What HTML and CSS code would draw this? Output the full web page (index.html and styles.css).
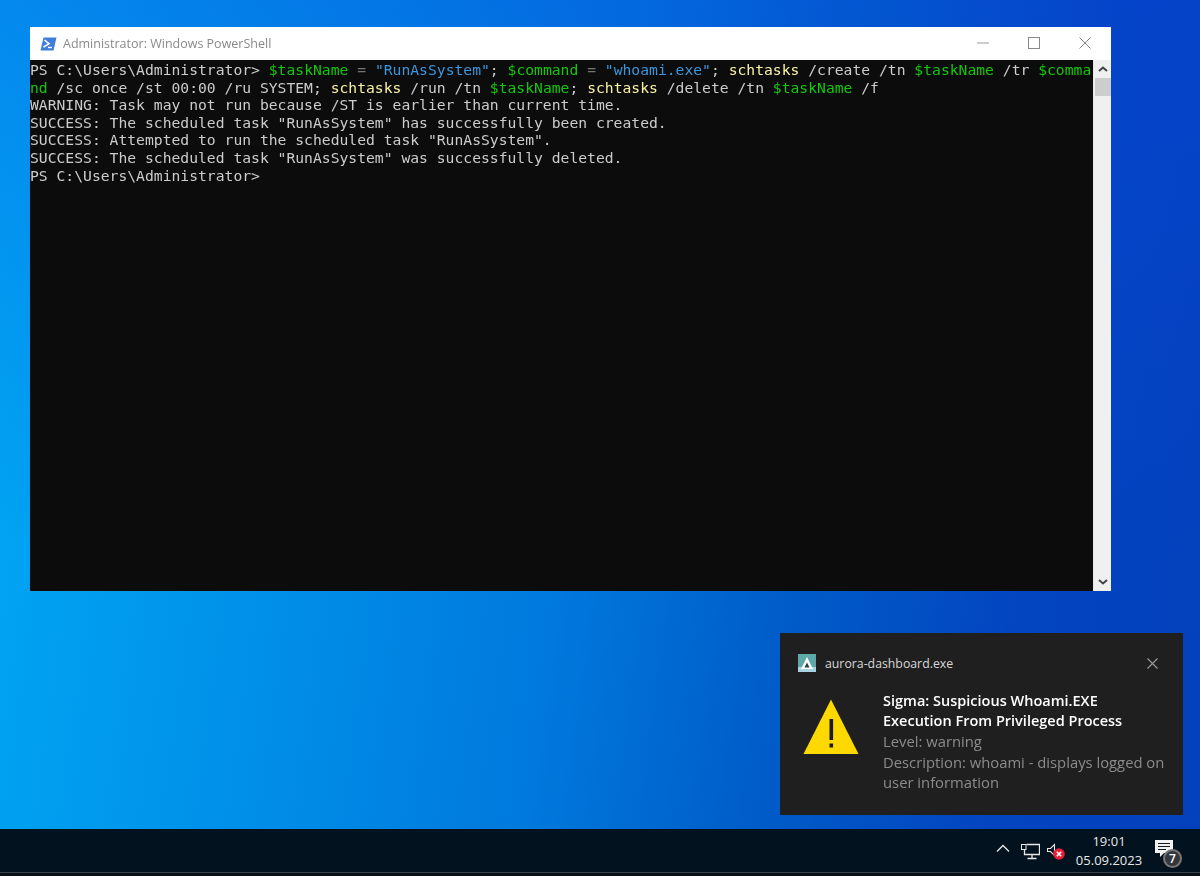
FILE: index.html
```html
<!DOCTYPE html>
<html lang="en">
<head>
  <meta charset="UTF-8" />
  <title>Windows PowerShell</title>
  <link rel="stylesheet" href="styles.css">
</head>
<body>

<div class="desktop">
  <!-- PowerShell window -->
  <div class="window">
    <div class="titlebar">
      <svg class="ps-icon" width="17" height="14" viewBox="0 0 17 14">
        <path d="M3.5 0.5H16.5L13.5 13.5H0.5Z" fill="#3f7fd9"/>
        <path d="M4.5 3L9 6.6L3.5 10.2" fill="none" stroke="#fff" stroke-width="1.6"/>
        <path d="M8 10.5H12" stroke="#fff" stroke-width="1.4"/>
      </svg>
      <span class="title">Administrator: Windows PowerShell</span>
      <div class="win-buttons">
        <svg width="12" height="12" viewBox="0 0 12 12"><path d="M0 6H12" stroke="#999" stroke-width="1"/></svg>
        <svg width="12" height="12" viewBox="0 0 12 12"><rect x="0.5" y="0.5" width="11" height="11" fill="none" stroke="#888"/></svg>
        <svg width="12" height="12" viewBox="0 0 12 12"><path d="M0.5 0.5L11.5 11.5M11.5 0.5L0.5 11.5" stroke="#888"/></svg>
      </div>
    </div>
    <div class="client">
      <div class="console">
        <div class="line">PS C:\Users\Administrator&gt; <span class="var">$taskName</span> <span class="op">=</span> <span class="str">"RunAsSystem"</span>; <span class="var">$command</span> <span class="op">=</span> <span class="str">"whoami.exe"</span>; <span class="cmd">schtasks</span> /create /tn <span class="var">$taskName</span> /tr <span class="var">$comma</span></div>
        <div class="line"><span class="var">nd</span> /sc once /st 00:00 /ru SYSTEM; <span class="cmd">schtasks</span> /run /tn <span class="var">$taskName</span>; <span class="cmd">schtasks</span> /delete /tn <span class="var">$taskName</span> /f</div>
        <div class="line">WARNING: Task may not run because /ST is earlier than current time.</div>
        <div class="line">SUCCESS: The scheduled task "RunAsSystem" has successfully been created.</div>
        <div class="line">SUCCESS: Attempted to run the scheduled task "RunAsSystem".</div>
        <div class="line">SUCCESS: The scheduled task "RunAsSystem" was successfully deleted.</div>
        <div class="line">PS C:\Users\Administrator&gt;</div>
      </div>
      <div class="scrollbar">
        <svg class="arrow" width="10" height="6" viewBox="0 0 10 6"><path d="M1 5L5 1.5L9 5" fill="none" stroke="#444" stroke-width="2"/></svg>
        <div class="thumb"></div>
        <div class="track"></div>
        <svg class="arrow" width="10" height="6" viewBox="0 0 10 6"><path d="M1 1L5 4.5L9 1" fill="none" stroke="#444" stroke-width="2"/></svg>
      </div>
    </div>
  </div>

  <!-- Toast notification -->
  <div class="toast">
    <div class="toast-head">
      <svg class="app-icon" width="18" height="18" viewBox="0 0 18 18">
        <rect width="18" height="18" fill="#5fa8a8"/>
        <rect y="13" width="18" height="5" fill="#a9d3e0"/>
        <path d="M9 3L15 15H3Z" fill="#fff"/>
        <path d="M9 8.5L11.5 13.5H6.5Z" fill="#27404a"/>
      </svg>
      <span class="app-name">aurora-dashboard.exe</span>
      <svg class="toast-close" width="11" height="11" viewBox="0 0 11 11"><path d="M0.5 0.5L10.5 10.5M10.5 0.5L0.5 10.5" stroke="#9a9a9a" stroke-width="1.1"/></svg>
    </div>
    <div class="toast-body">
      <svg class="warn" width="56" height="56" viewBox="0 0 56 56">
        <path d="M28 0.5L55.5 55H0.5Z" fill="#fdd900"/>
        <rect x="26.5" y="20" width="3.6" height="21" fill="#1a1a1a"/>
        <rect x="26.5" y="44.5" width="3.6" height="4" fill="#1a1a1a"/>
      </svg>
      <div class="toast-text">
        <div class="toast-title">Sigma: Suspicious Whoami.EXE<br>Execution From Privileged Process</div>
        <div class="toast-desc">Level: warning<br>Description: whoami - displays logged on<br>user information</div>
      </div>
    </div>
  </div>

  <!-- Taskbar -->
  <div class="taskbar">
    <svg class="tray-chevron" width="14" height="8" viewBox="0 0 14 8"><path d="M1 7.5L7 1.5L13 7.5" fill="none" stroke="#e8e8e8" stroke-width="1.3"/></svg>
    <svg class="tray-net" width="19" height="17" viewBox="0 0 19 17">
      <path d="M5.5 1.5H18.5V11.5H3.5V7" fill="none" stroke="#e8e8e8" stroke-width="1.3"/>
      <path d="M11 11.5V15.5M6.5 15.5H15.5" fill="none" stroke="#e8e8e8" stroke-width="1.3"/>
      <rect x="0.5" y="1.5" width="4.5" height="5" fill="none" stroke="#e8e8e8"/>
    </svg>
    <svg class="tray-vol" width="18" height="17" viewBox="0 0 18 17">
      <path d="M0.5 5.5H3.5L7.5 1.5V12.5L3.5 8.5H0.5Z" fill="none" stroke="#e8e8e8" stroke-width="1.1"/>
      <circle cx="12" cy="11" r="5.8" fill="#e81f36"/>
      <path d="M9.8 8.8L14.2 13.2M14.2 8.8L9.8 13.2" stroke="#fff" stroke-width="1.6"/>
    </svg>
    <div class="clock">19:01<br>05.09.2023</div>
    <div class="notif">
      <svg width="19" height="17" viewBox="0 0 19 17">
        <path d="M0 0H18V13H9L5 17V13H0Z" fill="#f2f2f2"/>
        <path d="M3 3.5H15M3 6.5H15M3 9.5H11" stroke="#101820" stroke-width="1.2"/>
      </svg>
      <span class="notif-count">7</span>
    </div>
  </div>
</div>

</body>
</html>
```

FILE: styles.css
```css
* {
  box-sizing: border-box;
}

html, body {
  margin: 0;
  height: 100%;
  overflow: hidden;
}

.desktop {
  position: relative;
  width: 1200px;
  height: 876px;
  overflow: hidden;
  background:
    linear-gradient(180deg, rgba(10,70,225,0.32) 0%, rgba(10,70,225,0) 62%),
    linear-gradient(98deg, #01a9f4 0%, #0092ea 24%, #0079dd 48%, #005cc8 66%, #0344c0 84%, #0340bc 100%);
}

.window {
  position: absolute;
  left: 30px;
  top: 27px;
  width: 1081px;
  height: 564px;
  display: flex;
  flex-direction: column;
  background: #fff;
}

.titlebar {
  height: 33px;
  display: flex;
  align-items: center;
  padding-left: 10px;
  background: #fff;
}

.ps-icon {
  margin-right: 6px;
}

.title {
  font-family: "Open Sans", sans-serif;
  font-size: 12.5px;
  color: #8a8a8a;
  filter: blur(0.3px);
}

.win-buttons {
  margin-left: auto;
  margin-bottom: 2px;
  display: flex;
  align-items: center;
  gap: 39px;
  padding-right: 20px;
}

.client {
  flex: 1;
  display: flex;
  min-height: 0;
}

.console {
  flex: 1;
  background: #0c0c0c;
  color: #cccccc;
  font-family: "DejaVu Sans Mono", monospace;
  font-size: 14.7px;
  line-height: 17.6px;
  padding-top: 1px;
  overflow: hidden;
  filter: blur(0.3px);
}

.line {
  white-space: pre;
  height: 17.6px;
}

.var { color: #16c60c; }
.str { color: #3a96dd; }
.cmd { color: #f9f1a5; }
.op { color: #767676; }

.scrollbar {
  width: 18px;
  display: flex;
  flex-direction: column;
  align-items: center;
  background: #f0f0f0;
  border-left: 1px solid #e6e6e6;
}

.arrow {
  margin: 6px 0;
  flex: none;
}

.thumb {
  width: 16px;
  height: 18px;
  background: #cdcdcd;
  flex: none;
}

.track {
  flex: 1;
}

.toast {
  position: absolute;
  left: 780px;
  top: 633px;
  width: 403px;
  height: 182px;
  background: #1f1f1f;
  font-family: "Open Sans", sans-serif;
}

.toast-head {
  display: flex;
  align-items: center;
  height: 18px;
  margin: 21px 0 0 18px;
  padding-right: 25px;
}

.app-name {
  margin-left: 9px;
  font-size: 12.3px;
  color: #d8d8d8;
}

.toast-close {
  margin-left: auto;
}

.toast-body {
  display: flex;
  margin-top: 19px;
  padding-left: 23px;
}

.warn {
  margin-top: 8px;
  flex: none;
}

.toast-text {
  margin-left: 24px;
  line-height: 20.4px;
  margin-top: -1px;
  padding-top: 0.5px;
  filter: blur(0.25px);
}

.toast-title {
  font-size: 14.5px;
  font-weight: 600;
  color: #fff;
}

.toast-desc {
  font-size: 14.8px;
  color: #8c8c8c;
}

.taskbar {
  position: absolute;
  left: 0;
  right: 0;
  top: 829px;
  height: 47px;
  padding: 0 26px 3px 0;
  display: flex;
  align-items: center;
  justify-content: flex-end;
  background: linear-gradient(#02121e 43px, #38424a 43px, #38424a 44px, #0a1016 44px);
  font-family: "Open Sans", sans-serif;
}

.tray-chevron { margin: 0 11px 6px 0; }
.tray-net { margin-right: 7px; }
.tray-vol { margin-right: 8px; }

.clock {
  width: 72px;
  text-align: center;
  font-size: 13px;
  line-height: 19px;
  color: #e8e8e8;
}

.notif {
  position: relative;
  margin-left: 10px;
  width: 19px;
  height: 17px;
  margin-bottom: 6px;
}

.notif-count {
  position: absolute;
  left: 8px;
  top: 9px;
  width: 19px;
  height: 19px;
  border-radius: 50%;
  background: #34383c;
  border: 2px solid #777;
  color: #fff;
  font-size: 12px;
  font-weight: 600;
  line-height: 15px;
  text-align: center;
}
```
